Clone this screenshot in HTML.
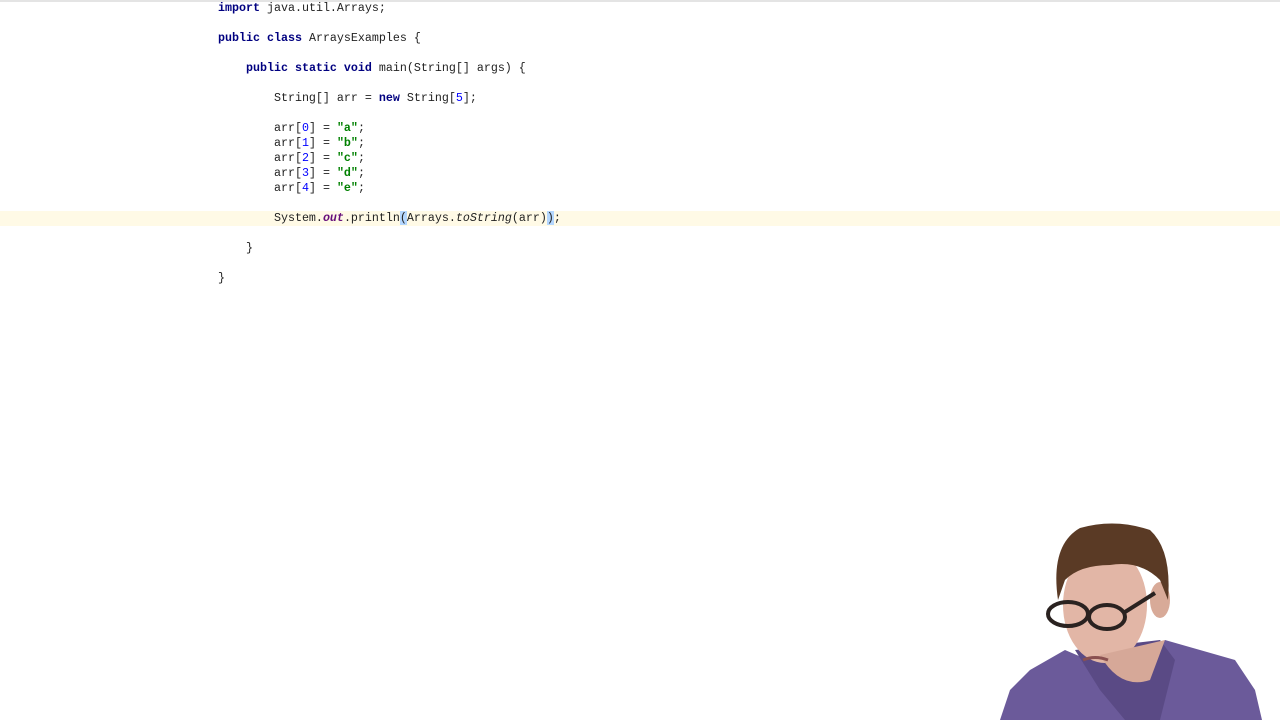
<!DOCTYPE html>
<html><head><style>
body{margin:0;width:1280px;height:720px;background:#fff;position:relative;overflow:hidden}
.top{position:absolute;left:0;top:0;width:1280px;height:2px;background:#e4e4e4}
.hl{position:absolute;left:0;top:211px;width:1280px;height:15px;background:#fffae6}
pre{position:absolute;left:218px;top:1px;margin:0;font-family:"Liberation Mono",monospace;font-size:11.67px;line-height:15px;color:#222}
.k{color:#000080;font-weight:bold}
.n{color:#0000ff}
.s{color:#008000;font-weight:bold}
.f{color:#660e7a;font-weight:bold;font-style:italic}
.i{font-style:italic}
.b{background:#b4d7ff}
</style></head><body>
<div class="top"></div>
<div class="hl"></div>
<pre><span class="k">import</span> java.util.Arrays;

<span class="k">public class</span> ArraysExamples {

    <span class="k">public static void</span> main(String[] args) {

        String[] arr = <span class="k">new</span> String[<span class="n">5</span>];

        arr[<span class="n">0</span>] = <span class="s">"a"</span>;
        arr[<span class="n">1</span>] = <span class="s">"b"</span>;
        arr[<span class="n">2</span>] = <span class="s">"c"</span>;
        arr[<span class="n">3</span>] = <span class="s">"d"</span>;
        arr[<span class="n">4</span>] = <span class="s">"e"</span>;

        System.<span class="f">out</span>.println<span class="b">(</span>Arrays.<span class="i">toString</span>(arr)<span class="b">)</span>;

    }

}</pre>
<svg style="position:absolute;left:0;top:0" width="1280" height="720">
<path d="M1000 720 L1010 690 L1030 670 L1065 650 L1100 665 L1140 660 L1165 640 L1200 650 L1235 660 L1255 690 L1262 720 Z" fill="#6b5a9a"/>
<path d="M1075 650 L1100 690 L1125 720 L1160 720 L1175 660 L1160 640 Z" fill="#5a4a85"/>
<ellipse cx="1105" cy="605" rx="42" ry="58" fill="#e2b6a6"/>
<path d="M1100 655 Q1120 690 1150 680 L1165 640 Z" fill="#d6a898"/>
<ellipse cx="1160" cy="600" rx="10" ry="18" fill="#d8aa98"/>
<path d="M1058 600 Q1050 545 1080 528 Q1115 518 1150 530 Q1172 550 1168 600 L1160 580 Q1140 560 1110 565 Q1080 565 1065 580 Z" fill="#5a3a25"/>
<ellipse cx="1068" cy="614" rx="20" ry="12" fill="none" stroke="#2a2220" stroke-width="4"/>
<ellipse cx="1107" cy="617" rx="18" ry="12" fill="none" stroke="#2a2220" stroke-width="4"/>
<path d="M1125 612 L1155 593" stroke="#2a2220" stroke-width="4"/>
<path d="M1083 660 Q1095 655 1108 660" stroke="#8a5050" stroke-width="3" fill="none"/>
</svg>
</body></html>
